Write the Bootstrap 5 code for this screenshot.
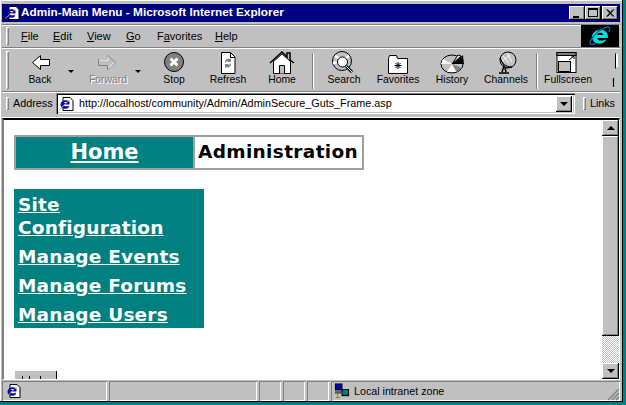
<!DOCTYPE html>
<html lang="en">
<head>
<meta charset="UTF-8">
<title>Admin-Main Menu</title>
<link href="https://cdn.jsdelivr.net/npm/bootstrap@5.3.3/dist/css/bootstrap.min.css" rel="stylesheet">
<style>
html, body { height: 100%; margin: 0; background: #008080; overflow: hidden; }
body { font-family: "Liberation Sans", Arial, sans-serif; font-size: 10.7px; line-height: 1; color: #000; }
.ie-window { width: 623px; height: 402px; background: #c0c0c0; padding: 4px 2px 0 2px; box-shadow: inset 1px 1px 0 #fff; border-right: 1px solid #000; border-bottom: 1px solid #000; }
.ie-title { height: 18px; background: #000080; color: #fff; font-weight: 700; font-size: 11.8px; padding: 0 2px 0 2px; margin-bottom: 2px; flex: none; }
.win-btn { width: 16px; height: 14px; background: #c0c0c0; box-shadow: inset -1px -1px 0 #000, inset 1px 1px 0 #fff, inset -2px -2px 0 #808080; }
.win-btns { gap: 0; }
.win-btns .win-btn:last-child { margin-left: 1px; }
.ie-bar { border-top: 1px solid #808080; box-shadow: inset 0 1px 0 #fff; position: relative; flex: none; }
.grip { width: 3px; background: #c0c0c0; box-shadow: inset 1px 1px 0 #fff, inset -1px -1px 0 #808080; flex: none; }
.menu-row { height: 23px; padding: 2px 0 2px 4px; }
.menu-item { position: absolute; top: 6px; font-size: 11px; }
.menu-item u { text-underline-offset: 1px; }
.ie-logo { width: 38px; height: 22px; background: #000; margin: -2px 1px 0 auto; }
.tool-row { height: 44px; padding: 3px 0 2px 4px; }
.tool { position: absolute; top: 3px; width: 54px; display: flex; flex-direction: column; align-items: center; font-size: 10.4px; }
.tool svg { height: 24px; width: 28px; }
.tool.off { color: #808080; text-shadow: 1px 1px 0 #fff; }
.tool-sep { position: absolute; top: 5px; height: 36px; width: 2px; box-shadow: inset 1px 0 0 #808080, inset -1px 0 0 #fff; }
.drop { position: absolute; top: 22px; width: 0; height: 0; border: 3px solid transparent; border-top: 3px solid #000; border-bottom: 0; }
.tool-clip { position: absolute; left: 610px; top: 4px; }
.addr-row { height: 24px; padding: 1px 0 1px 4px; }
.addr-label { font-size: 10.8px; margin-left: 4px; width: 38px; flex: none; }
.addr-input { width: 519px; height: 21px; flex: none; margin-left: 5px; background: #fff; font-size: 10.8px; box-shadow: inset 1px 1px 0 #808080, inset 2px 2px 0 #000, inset -1px -1px 0 #fff, inset -2px -2px 0 #c0c0c0; padding: 2px 3px 2px 2px; }
.addr-drop { width: 16px; height: 16px; background: #c0c0c0; box-shadow: inset -1px -1px 0 #000, inset 1px 1px 0 #fff, inset -2px -2px 0 #808080; }
.tri-down { border: 4px solid transparent; border-top: 4px solid #000; border-bottom: 0; width: 0; height: 0; }
.tri-up { border: 4px solid transparent; border-bottom: 4px solid #000; border-top: 0; width: 0; height: 0; }
.view-row { height: 262px; flex: none; border-top: 2px solid #000; box-shadow: 0 -1px 0 #fff; margin-top: 3px; border-left: 2px solid #808080; border-right: 1px solid #fff; border-bottom: 1px solid #fff; }
.ie-page { width: 599px; height: 100%; background: #fff; overflow: hidden; padding: 15px 0 0 10px; }
.nav-tbl { width: 350px; height: 35px; border: 2px solid #a0a0a0; }
.nav-home { width: 178px; flex: none; background: #008080; border-right: 1px solid #a0a0a0; }
.nav-here { border-left: 1px solid #a0a0a0; padding-left: 3px; font-family: "DejaVu Sans", Verdana, sans-serif; font-weight: 700; font-size: 18.5px; letter-spacing: .35px; color: #000; white-space: nowrap; }
.nav-home a, .side-menu a { color: #fff; font-family: "DejaVu Sans", Verdana, sans-serif; font-weight: 700; text-decoration: underline; }
.nav-home a { font-size: 21px; }
.side-menu { width: 190px; height: 139px; background: #008080; margin-top: 19px; padding: 4px 3px 0 4px; }
.side-menu a { display: block; font-size: 18.5px; letter-spacing: .2px; line-height: 23px; margin-bottom: 6px; }
.stub-btn { width: 42px; height: 9px; margin: 43px 0 0 1px; background: #c0c0c0; border-right: 1px solid #000; display: block; }
.scroll { width: 17px; flex: none; background: #c0c0c0; box-shadow: inset 1px 0 0 #e8e8e8; }
.scroll-btn { height: 16px; flex: none; background: #c0c0c0; box-shadow: inset -1px -1px 0 #000, inset 1px 1px 0 #fff, inset -2px -2px 0 #808080; }
.scroll-thumb { height: 200px; flex: none; background: #c0c0c0; box-shadow: inset -1px -1px 0 #000, inset 1px 1px 0 #fff, inset -2px -2px 0 #808080; }
.scroll-track { background-color: #fff; background-image: conic-gradient(#c0c0c0 25%, #fff 0 50%, #c0c0c0 0 75%, #fff 0); background-size: 2px 2px; }
.status-row { height: 20px; margin-top: 1px; gap: 2px; flex: none; }
.pane { height: 20px; box-shadow: inset 1px 1px 0 #808080, inset -1px -1px 0 #fff; flex: none; padding: 2px 3px; }
.zone { flex: 1 1 auto; position: relative; }
.sizer { position: absolute; right: 0; bottom: 0; }
</style>
</head>
<body>
<div class="ie-window d-flex flex-column">
  <div class="ie-title d-flex align-items-center">
    <svg width="17" height="16" viewBox="0 0 16 16" class="flex-shrink-0"><path d="M4.500 1.500h7l3 3v10h-10z" fill="#fff" stroke="#000"/><path d="M2 9c0-4 5-6.500 9-3.500V8.500H5c.5 2 3 2.500 5.500 1l-.5 2.500c-3 1.500-8 .5-8-3zM5 7h3.500C8 5.500 6 5.500 5 7z" fill="#0000c8" fill-rule="evenodd"/><path d="M1 13c2-1 7-6 10-9" stroke="#e8c000" fill="none"/></svg>
    <span class="ms-0">Admin-Main Menu - Microsoft Internet Explorer</span>
    <div class="win-btns d-flex ms-auto">
      <div class="win-btn d-flex"><svg width="16" height="14"><rect x="4" y="10" width="6" height="2"/></svg></div>
      <div class="win-btn d-flex"><svg width="16" height="14"><rect x="3.500" y="2.500" width="9" height="8" fill="none" stroke="#000"/><rect x="3" y="2" width="10" height="2"/></svg></div>
      <div class="win-btn d-flex"><svg width="16" height="14"><path d="M4.500 3.500l6.500 7M5.500 3.500l6.500 7M11 3.500l-6.500 7M12 3.500l-6.500 7" stroke="#000"/></svg></div>
    </div>
  </div>

  <div class="ie-bar menu-row d-flex">
    <div class="grip"></div>
    <span class="menu-item" style="left:19px"><u>F</u>ile</span>
    <span class="menu-item" style="left:51px"><u>E</u>dit</span>
    <span class="menu-item" style="left:85px"><u>V</u>iew</span>
    <span class="menu-item" style="left:124px"><u>G</u>o</span>
    <span class="menu-item" style="left:155px">F<u>a</u>vorites</span>
    <span class="menu-item" style="left:213px"><u>H</u>elp</span>
    <div class="ie-logo d-flex align-items-center justify-content-center">
      <svg width="22" height="20" viewBox="0 0 22 20"><path d="M3 11c0-6 8-9 13-6 3 2 3 5 3 7H8c.5 3 6 3.500 9.500 1-1 3-4 5-8 4.500C5 17 3 14 3 11zM8 9h6c0-3-5-3-6 0z" fill="#00e0e0" fill-rule="evenodd"/><path d="M1 16C4 9 12 2 19 1c2 0 2 2 1 5M2 14c-2 4 0 6 5 3" stroke="#0060a0" stroke-width="1.500" fill="none"/></svg>
    </div>
  </div>

  <div class="ie-bar tool-row d-flex">
    <div class="grip"></div>
    <div class="tool" style="left:11px">
      <svg viewBox="0 0 28 24"><path d="M6.500 11.500l8-7v4h9v6h-9v4z" fill="#fff" stroke="#000"/></svg>
      <span>Back</span>
    </div>
    <div class="drop" style="left:66px"></div>
    <div class="tool off" style="left:79px">
      <svg viewBox="0 0 28 24"><path d="M21.500 11.500l-8-7v4h-9v6h9v4z" fill="#c0c0c0" stroke="#808080"/><path d="M5 9h9V5.500M14.500 17l6-5.500" fill="none" stroke="#fff"/></svg>
      <span>Forward</span>
    </div>
    <div class="drop" style="left:133px"></div>
    <div class="tool" style="left:145px">
      <svg viewBox="0 0 28 24"><circle cx="14" cy="11" r="9.500" fill="#808080" stroke="#000"/><path d="M10.500 7.500l7 7M17.500 7.500l-7 7" stroke="#fff" stroke-width="3"/></svg>
      <span>Stop</span>
    </div>
    <div class="tool" style="left:199px">
      <svg viewBox="0 0 28 24"><path d="M7.500 1.500h9l4.500 4.500v16.500H7.500z" fill="#fff" stroke="#000"/><path d="M16.500 1.500v5h4.500" fill="none" stroke="#000"/><path d="M11 11c0-3 3-4 5-3l1-1v4h-4l1-1c-1 0-2 0-2 2zM17 13c0 3-3 4-5 3l-1 1v-4h4l-1 1c1 0 2 0 2-2z" fill="#808080"/></svg>
      <span>Refresh</span>
    </div>
    <div class="tool" style="left:253px">
      <svg viewBox="0 0 28 24"><path d="M2 12L14 1l5 5V2h3v7l4 3" fill="none" stroke="#000" stroke-width="1.500"/><path d="M5.500 10.500L14 3l8.500 7.500v12h-17z" fill="#fff" stroke="#000"/><path d="M11.500 22.500v-8h5v8" fill="#c0c0c0" stroke="#000"/></svg>
      <span>Home</span>
    </div>
    <div class="tool-sep" style="left:310px"></div>
    <div class="tool" style="left:315px">
      <svg viewBox="0 0 28 24"><circle cx="12" cy="10" r="9.500" fill="#c0c0c0" stroke="#000"/><path d="M5 5l5 3M19 5l-5 3M3 12l6-1" stroke="#fff" stroke-width="2.500"/><circle cx="12.500" cy="11" r="5" fill="#fff" stroke="#000"/><path d="M16 15l6 6" stroke="#000" stroke-width="3"/><path d="M16 15l6 6" stroke="#fff"/></svg>
      <span>Search</span>
    </div>
    <div class="tool" style="left:369px">
      <svg viewBox="0 0 28 24"><path d="M4.500 7.500l1-3h7l1 3h10v15h-19z" fill="#fff" stroke="#000"/><path d="M14 11v7M10.500 14.500h7M11.500 12l5 5M16.500 12l-5 5" stroke="#000"/></svg>
      <span>Favorites</span>
    </div>
    <div class="tool" style="left:423px">
      <svg viewBox="0 0 28 24"><ellipse cx="14" cy="13" rx="11" ry="9" fill="#c0c0c0" stroke="#000"/><path d="M14 13L25 4l1 9z" fill="#000"/><path d="M14 13L5 8l-2 5zM14 13l-5 8h9z" fill="#fff"/><path d="M14 13L24 17l-5 4z" fill="#808080"/><path d="M14 13l6-9 3 1z" fill="#fff" stroke="#000"/></svg>
      <span>History</span>
    </div>
    <div class="tool" style="left:477px">
      <svg viewBox="0 0 28 24"><circle cx="16" cy="9" r="8" fill="#c0c0c0" stroke="#000"/><path d="M8 7c2 6 6 9 12 9l-7 1z" fill="#808080" stroke="#000"/><path d="M11 5l6 7M15 2l5 9M10 10l8-6" stroke="#fff"/><path d="M12 15l-2 6M7 22h10M13 17l1 4" stroke="#000" stroke-width="1.500"/></svg>
      <span>Channels</span>
    </div>
    <div class="tool-sep" style="left:534px"></div>
    <div class="tool" style="left:539px">
      <svg viewBox="0 0 28 24"><rect x="3" y="1.500" width="19" height="20" fill="#fff" stroke="#000"/><rect x="3" y="1.500" width="19" height="3" fill="#808080" stroke="#000"/><rect x="4.500" y="10.500" width="12" height="10" fill="#c0c0c0" stroke="#000"/><path d="M15 9l5-4M17 5h3v3" fill="none" stroke="#000"/></svg>
      <span>Fullscreen</span>
    </div>
    <svg class="tool-clip" width="6" height="36"><path d="M3.500 1.500v15" stroke="#000"/><path d="M5 2v13" stroke="#fff" stroke-width="2"/><path d="M1.500 26v9" stroke="#000" stroke-width="1.200"/></svg>
  </div>

  <div class="ie-bar addr-row d-flex align-items-center">
    <div class="grip align-self-stretch my-1"></div>
    <span class="addr-label">Address</span>
    <div class="addr-input d-flex align-items-center">
      <svg width="17" height="16" viewBox="0 0 16 16" class="flex-shrink-0"><path d="M4.500 1.500h7l3 3v10h-10z" fill="#fff" stroke="#000"/><path d="M2 9c0-4 5-6.500 9-3.500V8.500H5c.5 2 3 2.500 5.500 1l-.5 2.500c-3 1.500-8 .5-8-3zM5 7h3.500C8 5.500 6 5.500 5 7z" fill="#0000c8" fill-rule="evenodd"/><path d="M1 13c2-1 7-6 10-9" stroke="#e8c000" fill="none"/></svg>
      <span class="ms-1 flex-grow-1">http://localhost/community/Admin/AdminSecure_Guts_Frame.asp</span>
      <div class="addr-drop d-flex align-items-center justify-content-center flex-shrink-0"><div class="tri-down"></div></div>
    </div>
    <div class="grip align-self-stretch ms-2 my-1"></div>
    <span class="ms-1">Links</span>
  </div>

  <div class="view-row d-flex">
    <div class="ie-page">
      <div class="nav-tbl d-flex">
        <div class="nav-home d-flex align-items-center justify-content-center"><a href="#">Home</a></div>
        <div class="nav-here d-flex align-items-center flex-grow-1">Administration</div>
      </div>
      <div class="side-menu">
        <a href="#">Site Configuration</a>
        <a href="#">Manage Events</a>
        <a href="#">Manage Forums</a>
        <a href="#">Manage Users</a>
      </div>
      <svg class="stub-btn"><path d="M7.500 5v4M14.500 5v4M25.500 5v4" stroke="#000"/></svg>
    </div>
    <div class="scroll d-flex flex-column">
      <div class="scroll-btn d-flex align-items-center justify-content-center"><div class="tri-up"></div></div>
      <div class="scroll-thumb"></div>
      <div class="scroll-track flex-grow-1"></div>
      <div class="scroll-btn d-flex align-items-center justify-content-center"><div class="tri-down"></div></div>
    </div>
  </div>

  <div class="status-row d-flex">
    <div class="pane d-flex align-items-center" style="width:105px">
      <svg width="17" height="16" viewBox="0 0 16 16"><path d="M4.500 1.500h7l3 3v10h-10z" fill="#fff" stroke="#000"/><path d="M2 9c0-4 5-6.500 9-3.500V8.500H5c.5 2 3 2.500 5.500 1l-.5 2.500c-3 1.500-8 .5-8-3zM5 7h3.500C8 5.500 6 5.500 5 7z" fill="#0000c8" fill-rule="evenodd"/><path d="M1 13c2-1 7-6 10-9" stroke="#e8c000" fill="none"/></svg>
    </div>
    <div class="pane" style="width:148px"></div>
    <div class="pane" style="width:22px"></div>
    <div class="pane" style="width:22px"></div>
    <div class="pane" style="width:22px"></div>
    <div class="pane zone d-flex align-items-center">
      <svg width="16" height="16" viewBox="0 0 17 16" class="me-1"><rect x="1.500" y=".5" width="7" height="6" fill="#0000c0" stroke="#000"/><rect x="8.500" y="6.500" width="7" height="6" fill="#008080" stroke="#000"/><path d="M1 8h8M1 10h7M8 13h8" stroke="#000"/><path d="M4 8v7M2 15h4" stroke="#808000"/></svg>
      <span>Local intranet zone</span>
      <svg class="sizer" width="13" height="13"><path d="M12 1L1 12M12 5l-7 7M12 9l-3 3" stroke="#808080" stroke-width="1.400"/></svg>
    </div>
  </div>
</div>
</body>
</html>
